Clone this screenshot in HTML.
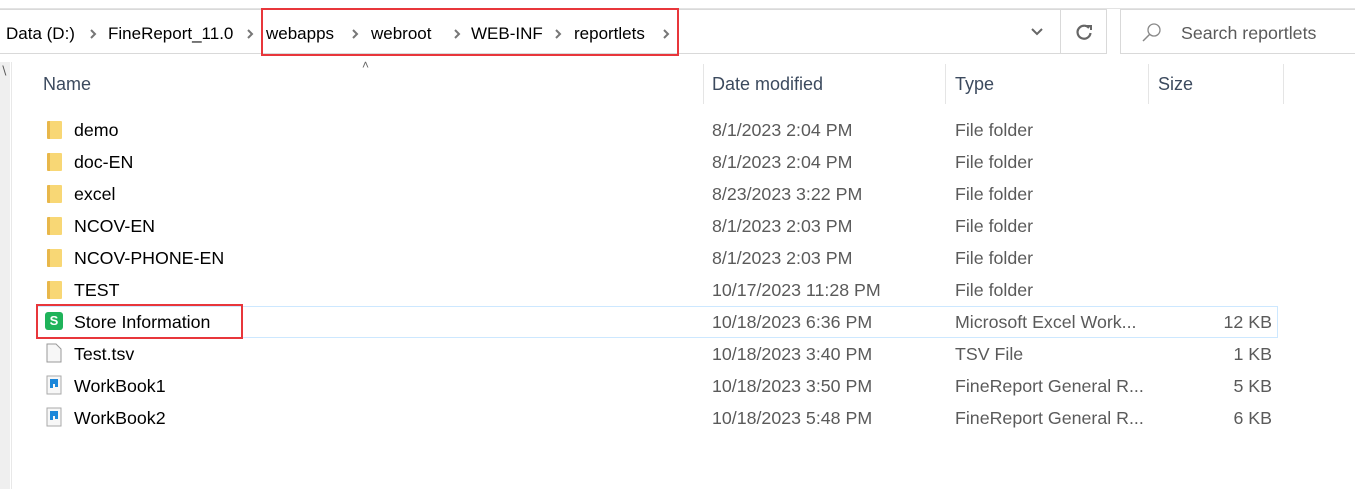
<!DOCTYPE html><html><head><style>
body{margin:0;width:1355px;height:489px;background:#fff;font-family:"Liberation Sans",sans-serif;position:relative;overflow:hidden;color:#000}
.a{position:absolute;white-space:nowrap}
.t{font-size:17px}
.r{font-size:17.8px}
.g{color:#5a5a5a}
.hd{color:#3c4a5e;font-size:18px}
.sep{position:absolute;top:64px;height:40px;width:1px;background:#e5e5e5}
.fold{position:absolute;left:47px;width:15px;height:18px;background:#f8d775;border-left:3px solid #e8b74a;box-sizing:border-box;border-radius:1px}
.chev{position:absolute;top:28px}
</style></head><body>
<div class="a" style="left:0;top:8px;width:1355px;height:1px;background:#e3e3e3"></div>
<div class="a" style="left:0;top:9px;width:1107px;height:45px;border:1px solid #d9d9d9;border-left:none;box-sizing:border-box"></div>
<div class="a" style="left:1060px;top:9px;width:1px;height:45px;background:#d9d9d9"></div>
<div class="a" style="left:1120px;top:9px;width:240px;height:45px;border:1px solid #d9d9d9;box-sizing:border-box"></div>
<div class="a t" style="left:6px;top:24px">Data (D:)</div>
<div class="a t" style="left:108px;top:24px">FineReport_11.0</div>
<div class="a t" style="left:266px;top:24px">webapps</div>
<div class="a t" style="left:371px;top:24px">webroot</div>
<div class="a t" style="left:471px;top:24px">WEB-INF</div>
<div class="a t" style="left:574px;top:24px">reportlets</div>
<svg class="chev" style="left:89px" width="8" height="12"><path d="M2 2l4 4-4 4" stroke="#777" stroke-width="2" fill="none"/></svg>
<svg class="chev" style="left:246px" width="8" height="12"><path d="M2 2l4 4-4 4" stroke="#777" stroke-width="2" fill="none"/></svg>
<svg class="chev" style="left:351px" width="8" height="12"><path d="M2 2l4 4-4 4" stroke="#777" stroke-width="2" fill="none"/></svg>
<svg class="chev" style="left:453px" width="8" height="12"><path d="M2 2l4 4-4 4" stroke="#777" stroke-width="2" fill="none"/></svg>
<svg class="chev" style="left:554px" width="8" height="12"><path d="M2 2l4 4-4 4" stroke="#777" stroke-width="2" fill="none"/></svg>
<svg class="chev" style="left:662px" width="8" height="12"><path d="M2 2l4 4-4 4" stroke="#777" stroke-width="2" fill="none"/></svg>
<div class="a" style="left:261px;top:8px;width:418px;height:48px;border:2px solid #e8363b;box-sizing:border-box"></div>
<svg class="a" style="left:1030px;top:27px" width="14" height="10"><path d="M2 2l5 5 5-5" stroke="#666" stroke-width="2" fill="none"/></svg>
<svg class="a" style="left:1074px;top:22px" width="20" height="20"><path d="M15 6A6.5 6.5 0 1 0 16.5 11" stroke="#666" stroke-width="2.2" fill="none"/><path d="M11 4h6v-1M17 3v5" stroke="#666" stroke-width="2" fill="none"/></svg>
<svg class="a" style="left:1141px;top:22px" width="22" height="22"><circle cx="13" cy="8" r="6" stroke="#888" stroke-width="1.3" fill="none"/><path d="M9 12L2 19" stroke="#888" stroke-width="1.5"/></svg>
<div class="a r g" style="left:1181px;top:23px">Search reportlets</div>
<div class="a" style="left:0;top:62px;width:10px;height:427px;background:#efefef"></div>
<div class="a" style="left:11px;top:62px;width:1px;height:427px;background:#e8e8e8"></div>
<div class="a" style="left:0;top:64px;font-size:12px;color:#555">&#x2216;</div>
<div class="a" style="left:362px;top:58px;font-size:12px;color:#666">&#x2C4;</div>
<div class="a hd" style="left:43px;top:74px">Name</div>
<div class="a hd" style="left:712px;top:74px">Date modified</div>
<div class="a hd" style="left:955px;top:74px">Type</div>
<div class="a hd" style="left:1158px;top:74px">Size</div>
<div class="sep" style="left:703px"></div><div class="sep" style="left:945px"></div><div class="sep" style="left:1148px"></div><div class="sep" style="left:1283px"></div>
<div class="a" style="left:36px;top:306px;width:1242px;height:32px;border:1px solid #cde8ff;box-sizing:border-box"></div>
<div class="fold" style="top:121px"></div><div class="fold" style="top:153px"></div><div class="fold" style="top:185px"></div><div class="fold" style="top:217px"></div><div class="fold" style="top:249px"></div><div class="fold" style="top:281px"></div>
<div class="a" style="left:45px;top:312px;width:18px;height:18px;background:#1fb35a;border-radius:3px;color:#fff;font-size:13px;font-weight:bold;text-align:center;line-height:18px">S</div>
<svg class="a" style="left:46px;top:343px" width="16" height="20"><path d="M1 1h9l5 5v13H1z" fill="#f7f7f7" stroke="#999"/></svg>
<svg class="a" style="left:46px;top:375px" width="16" height="20"><path d="M1 1h14v18H1z" fill="#f7f7f7" stroke="#aaa"/><path d="M4 4h8v8h-3v-3H7v4H4z" fill="#1a86d9"/></svg>
<svg class="a" style="left:46px;top:407px" width="16" height="20"><path d="M1 1h14v18H1z" fill="#f7f7f7" stroke="#aaa"/><path d="M4 4h8v8h-3v-3H7v4H4z" fill="#1a86d9"/></svg>
<div class="a" style="left:36px;top:304px;width:207px;height:35px;border:2px solid #e8363b;box-sizing:border-box"></div>
<div class="a r" style="left:74px;top:114px;line-height:32px">demo<br>doc-EN<br>excel<br>NCOV-EN<br>NCOV-PHONE-EN<br>TEST<br>Store Information<br>Test.tsv<br>WorkBook1<br>WorkBook2</div>
<div class="a r g" style="left:712px;top:114px;line-height:32px">8/1/2023 2:04 PM<br>8/1/2023 2:04 PM<br>8/23/2023 3:22 PM<br>8/1/2023 2:03 PM<br>8/1/2023 2:03 PM<br>10/17/2023 11:28 PM<br>10/18/2023 6:36 PM<br>10/18/2023 3:40 PM<br>10/18/2023 3:50 PM<br>10/18/2023 5:48 PM</div>
<div class="a r g" style="left:955px;top:114px;line-height:32px">File folder<br>File folder<br>File folder<br>File folder<br>File folder<br>File folder<br>Microsoft Excel Work...<br>TSV File<br>FineReport General R...<br>FineReport General R...</div>
<div class="a r g" style="left:1150px;width:122px;text-align:right;top:306px;line-height:32px">12 KB<br>1 KB<br>5 KB<br>6 KB</div>
</body></html>
